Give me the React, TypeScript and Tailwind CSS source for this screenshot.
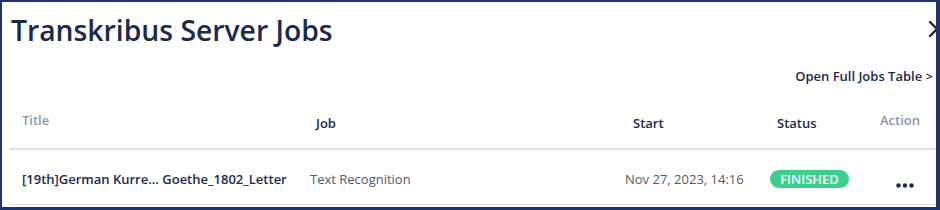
import React from "react";

export default function App() {
  return (
    <div
      className="w-[940px] h-[210px] box-border overflow-hidden bg-white border-solid border-[#1d356b] border-t-2 border-l-2 border-r-[4px] border-b-[3px] flex flex-col"
      style={{ fontFamily: '"Open Sans", "Noto Sans", sans-serif' }}
    >
      {/* Title row */}
      <div className="flex items-start justify-between pl-[9px] h-[56px] shrink-0">
        <h1 className="text-[28.3px] leading-[36px] font-semibold text-[#1b2a4c] mt-[10px]">
          Transkribus Server Jobs
        </h1>
        <svg
          width="18"
          height="18"
          viewBox="0 0 18 18"
          className="mt-[18px] mr-[-10px] shrink-0"
          fill="none"
          stroke="#1b2a4c"
          strokeWidth="2.4"
          strokeLinecap="round"
        >
          <path d="M2 2 L16 16 M16 2 L2 16" />
        </svg>
      </div>

      {/* Link row */}
      <div className="flex justify-end items-center h-[38px] pr-[3px] shrink-0">
        <span className="text-[13px] font-semibold text-[#1b2a4c]">Open Full Jobs Table &gt;</span>
      </div>

      {/* Table */}
      <div className="ml-[8px] flex flex-col">
        {/* Header */}
        <div className="grid grid-cols-[290px_315px_150px_105px_1fr] h-[54px] border-b-2 border-[#e2e2e2] text-[13px] font-semibold">
          <div className="pl-[12px] pt-[15px] text-[#8c97ab]">Title</div>
          <div className="pl-[16px] pt-[18px] text-[#1b2a4c]">Job</div>
          <div className="pl-[18px] pt-[18px] text-[#1b2a4c]">Start</div>
          <div className="pl-[12px] pt-[18px] text-[#1b2a4c]">Status</div>
          <div className="pl-[10px] pt-[15px] text-[#8c97ab]">Action</div>
        </div>
        {/* Data row */}
        <div className="grid grid-cols-[290px_315px_150px_105px_1fr] h-[55px] pt-[5px] border-b border-[#dedede] text-[13px] items-center">
          <div className="pl-[12px] font-semibold text-[#1b2a4c] whitespace-nowrap">
            [19th]German Kurre... Goethe_1802_Letter
          </div>
          <div className="pl-[10px] text-[#555b63]">Text Recognition</div>
          <div className="pl-[10px] text-[#555b63] whitespace-nowrap">Nov 27, 2023, 14:16</div>
          <div className="pl-[5px]">
            <span className="inline-flex items-center justify-center h-[18px] w-[79px] rounded-full bg-[#3ccf8e] text-white font-semibold text-[13px] leading-none">
              FINISHED
            </span>
          </div>
          <div className="pl-[26px] pt-[12px]">
            <svg width="18" height="5" viewBox="0 0 18 5" fill="#1b2a4c">
              <circle cx="2.5" cy="2.5" r="2.2" />
              <circle cx="9" cy="2.5" r="2.2" />
              <circle cx="15.5" cy="2.5" r="2.2" />
            </svg>
          </div>
        </div>
      </div>
    </div>
  );
}
